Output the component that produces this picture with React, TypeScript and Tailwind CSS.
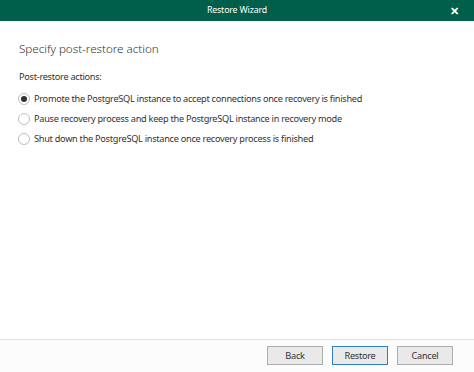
import React, {useState} from 'react';

const options = [
  'Promote the PostgreSQL instance to accept connections once recovery is finished',
  'Pause recovery process and keep the PostgreSQL instance in recovery mode',
  'Shut down the PostgreSQL instance once recovery process is finished',
];

export default function App() {
  const [selected, setSelected] = useState(0);

  return (
    <div className="w-[474px] h-[372px] flex flex-col bg-white text-[#333] text-[9.2px] tracking-[-0.28px] font-['Noto_Sans',sans-serif]">
      <div className="h-[21px] bg-[#005f4a] flex items-center relative">
        <span className="flex-1 text-center text-white text-[8.8px] tracking-[-0.15px] leading-none">Restore Wizard</span>
        <span className="absolute right-[15px] top-[5px] text-white text-[11px] font-bold leading-none">✕</span>
      </div>

      <div className="flex-1 flex flex-col px-[19px] pt-[19px]">
        <div className="text-[11.6px] font-light tracking-normal text-[#333] leading-[18px] whitespace-nowrap">Specify post-restore action</div>
        <div className="mt-[12px] leading-[14px] whitespace-nowrap">Post-restore actions:</div>
        <div className="mt-[5px] -ml-px flex flex-col">
          {options.map((text, i) => (
            <label key={i} className="h-[20px] flex items-center gap-[4px] cursor-default whitespace-nowrap" onClick={() => setSelected(i)}>
              <span className="w-[12px] h-[12px] shrink-0 rounded-full border border-[#bdbdbd] bg-white flex items-center justify-center">
                {selected === i && <span className="w-[6px] h-[6px] rounded-full bg-[#333]"/>}
              </span>
              <span>{text}</span>
            </label>
          ))}
        </div>
      </div>

      <div className="h-[33px] border-t border-[#e2e2e2] bg-[#fcfcfc] flex justify-end items-start gap-[9px] pt-[6px] pr-[21px]">
        <button className="w-[56px] h-[19px] border border-[#adadad] bg-[#e9e9e9] text-[9.2px] leading-none">Back</button>
        <button className="w-[56px] h-[19px] border border-[#2f7fc0] bg-[#e9e9e9] text-[9.2px] leading-none">Restore</button>
        <button className="w-[56px] h-[19px] border border-[#adadad] bg-[#e9e9e9] text-[9.2px] leading-none">Cancel</button>
      </div>
    </div>
  );
}
